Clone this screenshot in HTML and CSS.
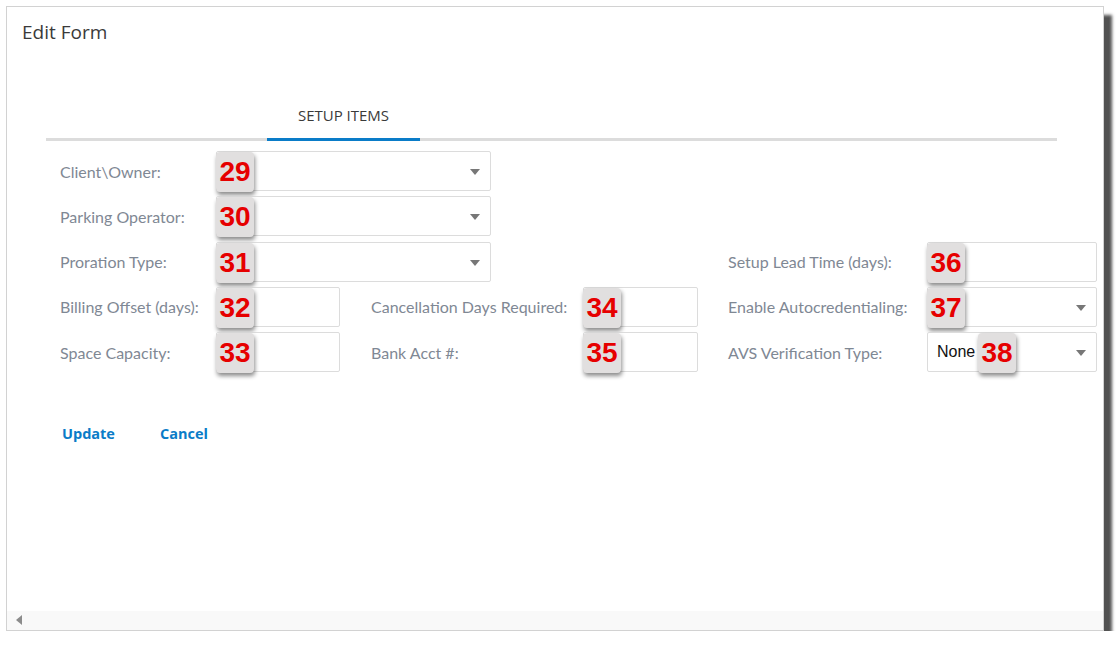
FILE: index.html
```html
<!DOCTYPE html>
<html lang="en">
<head>
  <meta charset="UTF-8" />
  <title>Edit Form</title>
  <link rel="stylesheet" href="styles.css">
</head>
<body>
  <div class="window">
    <h1 class="title">Edit Form</h1>

    <!-- Tabs -->
    <div class="tabs">
      <div class="tab active">SETUP ITEMS</div>
    </div>

    <!-- Form grid -->
    <div class="form-grid">
      <label class="lbl c1">Client\Owner:</label>
      <div class="field select wide c2"><span class="badge">29</span></div>

      <label class="lbl c1">Parking Operator:</label>
      <div class="field select wide c2"><span class="badge">30</span></div>

      <label class="lbl c1">Proration Type:</label>
      <div class="field select wide c2"><span class="badge">31</span></div>
      <label class="lbl c7">Setup Lead Time (days):</label>
      <div class="field c8"><span class="badge">36</span></div>

      <label class="lbl c1">Billing Offset (days):</label>
      <div class="field c2"><span class="badge">32</span></div>
      <label class="lbl c4">Cancellation Days Required:</label>
      <div class="field c5"><span class="badge">34</span></div>
      <label class="lbl c7">Enable Autocredentialing:</label>
      <div class="field select c8"><span class="badge">37</span></div>

      <label class="lbl c1">Space Capacity:</label>
      <div class="field c2"><span class="badge">33</span></div>
      <label class="lbl c4">Bank Acct #:</label>
      <div class="field c5"><span class="badge">35</span></div>
      <label class="lbl c7">AVS Verification Type:</label>
      <div class="field select c8"><span class="value">None</span><span class="badge after">38</span></div>
    </div>

    <div class="actions">
      <a href="#" class="link">Update</a>
      <a href="#" class="link">Cancel</a>
    </div>

    <!-- Horizontal scroller -->
    <div class="hscroll"><span class="arrow-left"></span></div>
  </div>
</body>
</html>
```

FILE: styles.css
```css
:root {
  --blue: #0a7cc8;
  --line: #dcdcdc;
  --label: #7f8894;
  --badge-red: #e60000;
}

* {
  margin: 0;
  padding: 0;
  box-sizing: border-box;
}
body {
  background: #fff;
  padding: 6px 0 0 6px;
  font-family: 'Open Sans', sans-serif;
  color: #333;
}
a {
  text-decoration: none;
}

/* Window frame */
.window {
  width: 1098px;
  height: 625px;
  border: 1px solid #d2d2d2;
  background: #fff;
  box-shadow: 8px 9px 3px rgba(0, 0, 0, 0.68);
  display: flex;
  flex-direction: column;
}
.title {
  font-size: 19px;
  font-weight: 400;
  color: #3a3a3a;
  padding: 12px 0 0 15px;
  line-height: 26px;
}

/* Tabs */
.tabs {
  margin: 60px 46px 0 39px;
  padding-left: 221px;
  border-bottom: 3px solid var(--line);
  display: flex;
}
.tab {
  width: 153px;
  text-align: center;
  font-size: 15px;
  line-height: 20px;
  padding-bottom: 13px;
  margin-bottom: -3px;
  color: #3a3a3a;
}
.tab.active {
  border-bottom: 3px solid var(--blue);
}

/* Form grid */
.form-grid {
  margin: 10px 0 0 53px;
  display: grid;
  grid-template-columns: 156px 124px 31px 212px 115px 30px 199px 170px;
  grid-auto-rows: 40px;
  row-gap: 5.25px;
  align-items: center;
}
.lbl {
  font-family: 'Lato', sans-serif;
  font-size: 16px;
  color: var(--label);
  white-space: nowrap;
}
.c1 { grid-column: 1; }
.c2 { grid-column: 2; }
.c4 { grid-column: 4; }
.c5 { grid-column: 5; }
.c7 { grid-column: 7; }
.c8 { grid-column: 8; }

.field {
  position: relative;
  height: 40px;
  border: 1px solid var(--line);
  border-radius: 2px;
  background: #fff;
  display: flex;
  align-items: center;
  padding-left: 9px;
}
.field.wide {
  grid-column: 2 / span 3;
  width: 275px;
}
.field.select::after {
  content: "";
  position: absolute;
  right: 10px;
  top: 17px;
  border-left: 5.5px solid transparent;
  border-right: 5.5px solid transparent;
  border-top: 6px solid #777;
}
.value {
  font-family: 'Liberation Sans', Arial, sans-serif;
  font-size: 16px;
  color: #111;
}

/* Callout badges */
.badge {
  position: absolute;
  left: -1px;
  top: 0;
  width: 38px;
  height: 40px;
  background: #e1dfdf;
  border-radius: 4px;
  box-shadow: 1px 3px 4px rgba(0, 0, 0, 0.45);
  font-family: 'Liberation Sans', Arial, sans-serif;
  font-weight: 700;
  font-size: 28px;
  line-height: 40px;
  color: var(--badge-red);
  text-align: center;
}
.badge.after {
  left: 50px;
}

/* Actions */
.actions {
  margin: 52px 0 0 55px;
  display: flex;
  gap: 45px;
}
.link {
  font-size: 14.5px;
  font-weight: 700;
  color: var(--blue);
}

/* Horizontal scroller */
.hscroll {
  margin-top: auto;
  height: 19px;
  background: #f9f9f9;
  position: relative;
}
.arrow-left {
  position: absolute;
  left: 9px;
  top: 4px;
  border-top: 5px solid transparent;
  border-bottom: 5px solid transparent;
  border-right: 6px solid #8c8c8c;
}
```
